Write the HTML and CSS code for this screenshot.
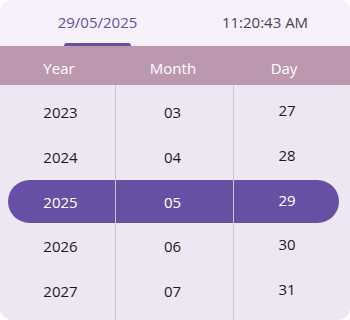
FILE: index.html
```html
<!DOCTYPE html>
<html>
<head>
<meta charset="utf-8">
<link rel="stylesheet" href="styles.css">
</head>
<body>
<div class="card">
  <div class="tabs">
    <div class="tab active"><span class="tab-label">29/05/2025</span><span class="indicator"></span></div>
    <div class="tab"><span class="tab-label">11:20:43 AM</span></div>
  </div>
  <div class="head">
    <div class="h-year">Year</div>
    <div class="h-month">Month</div>
    <div class="h-day">Day</div>
  </div>
  <div class="wheel">
    <div class="pill"></div>
    <div class="col year">
      <div class="cell">2023</div>
      <div class="cell">2024</div>
      <div class="cell sel">2025</div>
      <div class="cell">2026</div>
      <div class="cell">2027</div>
    </div>
    <div class="col divided month">
      <div class="cell">03</div>
      <div class="cell">04</div>
      <div class="cell sel">05</div>
      <div class="cell">06</div>
      <div class="cell">07</div>
    </div>
    <div class="col divided day">
      <div class="cell">27</div>
      <div class="cell">28</div>
      <div class="cell sel">29</div>
      <div class="cell">30</div>
      <div class="cell">31</div>
    </div>
  </div>
</div>
</body>
</html>
```
FILE: styles.css
```css
html, body {
  margin: 0;
  padding: 0;
  background: #ffffff;
}
body {
  font-family: "Open Sans", "Noto Sans", sans-serif;
  font-size: 15px;
}
.card {
  width: 350px;
  height: 320px;
  border-radius: 12px;
  overflow: hidden;
  background: #ede7f4;
  display: flex;
  flex-direction: column;
}
.tabs {
  height: 46px;
  background: #f7f1fc;
  display: grid;
  grid-template-columns: 195px 140px;
  flex: none;
}
.tab {
  display: flex;
  flex-direction: column;
  align-items: center;
  color: #49454f;
}
.tab-label {
  line-height: 20px;
  margin-top: 12px;
}
.tab.active {
  color: #6750a4;
}
.indicator {
  width: 67px;
  height: 3px;
  margin-top: 11px;
  border-radius: 3px 3px 0 0;
  background: #6750a4;
}
.head {
  height: 39px;
  background: #bc98b0;
  display: grid;
  grid-template-columns: 115px 118px 1fr;
  color: #ffffff;
  flex: none;
}
.head div {
  text-align: center;
  line-height: 20px;
  padding-top: 12px;
}
.head .h-year {
  padding-left: 3px;
}
.head .h-month {
  padding-right: 2px;
}
.head .h-day {
  padding-right: 15px;
}
.wheel {
  position: relative;
  flex: 1;
  display: grid;
  grid-template-columns: 115px 118px 1fr;
}
.pill {
  position: absolute;
  left: 8px;
  right: 11px;
  top: 95px;
  height: 43px;
  border-radius: 22px;
  background: #6750a4;
}
.col {
  position: relative;
  padding-top: 5px;
}
.col.divided {
  border-left: 1px solid #cbc3d2;
}
.col.year .cell {
  padding-left: 6px;
}
.col.month .cell {
  padding-right: 4px;
}
.col.day {
  padding-top: 3px;
}
.col.day .cell {
  padding-right: 10px;
}
.cell {
  height: 44.7px;
  display: flex;
  align-items: center;
  justify-content: center;
  color: #1d1b20;
}
.cell.sel {
  color: #ffffff;
}
```
